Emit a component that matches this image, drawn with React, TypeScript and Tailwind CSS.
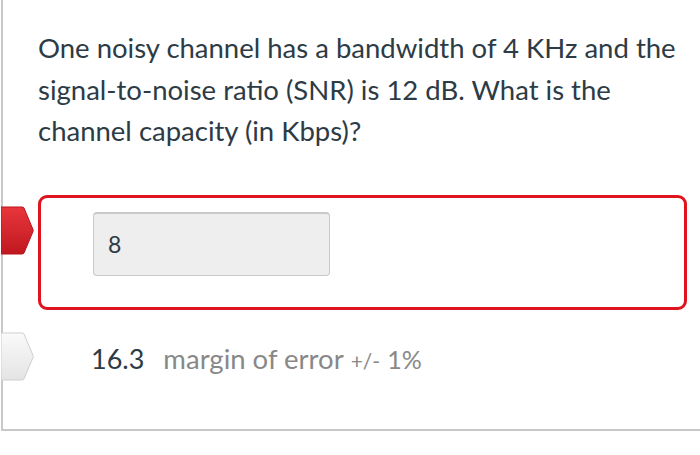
import React from "react";

const Flag = ({ red }: { red?: boolean }) => (
  <svg width="34" height="49" viewBox="0 0 34 49" className="absolute left-0">
    <defs>
      <linearGradient id={red ? "fr" : "fg"} x1="0" y1="0" x2="0" y2="1">
        <stop offset="0" stopColor={red ? "#e8363c" : "#fafafa"} />
        <stop offset="1" stopColor={red ? "#c01820" : "#e4e4e4"} />
      </linearGradient>
    </defs>
    <path
      d="M0 1 H21 Q22 1 23 2 L32 23.5 Q32.5 24.5 32 25.5 L23 47 Q22 48 21 48 H0 Z"
      fill={`url(#${red ? "fr" : "fg"})`}
      stroke={red ? "#b8141c" : "#cfcfcf"}
      strokeWidth="1"
    />
  </svg>
);

export default function App() {
  return (
    <div className="w-[700px] h-[455px] bg-white" style={{ fontFamily: "Lato, 'Noto Sans', sans-serif" }}>
      <div className="relative w-[700px] h-[431px] border-l-[2px] border-b-[2px] border-[#c8c8c8] ml-[1px]">
        <p className="pl-[35px] pt-[27px] text-[27.5px] leading-[41.5px] text-[#2d3b45] whitespace-nowrap">
          One noisy channel has a bandwidth of 4 KHz and the
          <br />
          signal-to-noise ratio (SNR) is 12 dB. What is the
          <br />
          channel capacity (in Kbps)?
        </p>

        <div className="relative mt-[43px]">
          <div className="absolute top-[11px] -left-[2px]">
            <Flag red />
          </div>
          <div className="ml-[35px] w-[649px] h-[115px] border-[3px] border-[#e0141e] rounded-[9px] pl-[52px] pt-[14px]">
            <div className="w-[237px] h-[64px] bg-[#eeeeee] border border-[#c9c9c9] border-t-[2px] rounded-[4px] flex items-center pl-[14px] text-[23px] text-[#2d3b45]">
              8
            </div>
          </div>
        </div>

        <div className="relative mt-[23px] h-[50px]">
          <div className="absolute -top-[1px] -left-[2px]">
            <Flag />
          </div>
          <div className="pl-[88px] pt-[9px] flex items-baseline text-[#2d3b45] leading-[33px]">
            <span className="text-[27px]">16.3</span>
            <span className="ml-[19px] text-[27.5px] text-[#888888]">margin of error</span>
            <span className="ml-[7px] text-[21px] text-[#888888]">+/-</span>
            <span className="ml-[7px] text-[25px] text-[#888888]">1%</span>
          </div>
        </div>
      </div>
    </div>
  );
}
